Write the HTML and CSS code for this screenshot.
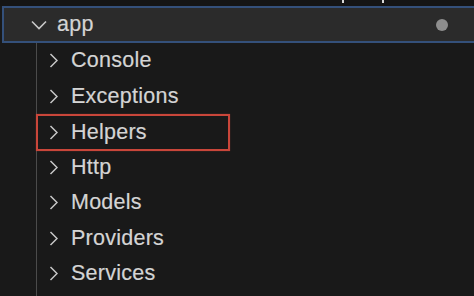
FILE: index.html
```html
<!DOCTYPE html>
<html>
<head>
<meta charset="utf-8">
<link rel="stylesheet" href="styles.css">
</head>
<body>
<div class="explorer">
  <div class="top-strip">
    <span class="frag frag-a"></span>
    <span class="frag frag-b"></span>
  </div>
  <div class="row folder-open">
    <svg class="chev-down" width="16" height="10" viewBox="0 0 16 10"><polyline points="1,1.5 8,8.5 15,1.5" fill="none" stroke="#c8c8c8" stroke-width="1.6"/></svg>
    <span class="label">app</span>
    <span class="dot"></span>
  </div>
  <div class="children">
    <div class="row child"><svg class="chev" width="9" height="15" viewBox="0 0 9 15"><polyline points="1.5,1 8,7.5 1.5,14" fill="none" stroke="#c8c8c8" stroke-width="1.5"/></svg><span class="label">Console</span></div>
    <div class="row child"><svg class="chev" width="9" height="15" viewBox="0 0 9 15"><polyline points="1.5,1 8,7.5 1.5,14" fill="none" stroke="#c8c8c8" stroke-width="1.5"/></svg><span class="label">Exceptions</span></div>
    <div class="row child highlight"><svg class="chev" width="9" height="15" viewBox="0 0 9 15"><polyline points="1.5,1 8,7.5 1.5,14" fill="none" stroke="#c8c8c8" stroke-width="1.5"/></svg><span class="label">Helpers</span></div>
    <div class="row child"><svg class="chev" width="9" height="15" viewBox="0 0 9 15"><polyline points="1.5,1 8,7.5 1.5,14" fill="none" stroke="#c8c8c8" stroke-width="1.5"/></svg><span class="label">Http</span></div>
    <div class="row child"><svg class="chev" width="9" height="15" viewBox="0 0 9 15"><polyline points="1.5,1 8,7.5 1.5,14" fill="none" stroke="#c8c8c8" stroke-width="1.5"/></svg><span class="label">Models</span></div>
    <div class="row child"><svg class="chev" width="9" height="15" viewBox="0 0 9 15"><polyline points="1.5,1 8,7.5 1.5,14" fill="none" stroke="#c8c8c8" stroke-width="1.5"/></svg><span class="label">Providers</span></div>
    <div class="row child"><svg class="chev" width="9" height="15" viewBox="0 0 9 15"><polyline points="1.5,1 8,7.5 1.5,14" fill="none" stroke="#c8c8c8" stroke-width="1.5"/></svg><span class="label">Services</span></div>
  </div>
</div>
</body>
</html>
```

FILE: styles.css
```css
html, body {
  margin: 0;
  padding: 0;
  background: #191919;
  width: 474px;
  height: 296px;
  overflow: hidden;
}

.explorer {
  font-family: "Liberation Sans", Arial, sans-serif;
  color: #d4d4d4;
  font-size: 21.5px;
  height: 296px;
  display: flex;
  flex-direction: column;
}

.top-strip {
  height: 6px;
  flex: none;
  display: flex;
  align-items: flex-start;
  background: #151515;
}

.frag {
  display: block;
  width: 2px;
  height: 3px;
  background: #d8d8d8;
}

.frag-a { margin-left: 342px; }
.frag-b { margin-left: 38px; }

.row {
  display: flex;
  align-items: center;
  box-sizing: border-box;
}

.folder-open {
  flex: none;
  height: 37px;
  margin-left: 2px;
  margin-right: -10px;
  border: 2px solid #34507a;
  background: #2b2b2b;
  padding-left: 27px;
}

.chev-down {
  flex: none;
  margin-right: 10px;
  margin-top: 1px;
}

.dot {
  margin-left: auto;
  margin-right: 34px;
  width: 12px;
  height: 12px;
  border-radius: 50%;
  background: #8e8e8e;
}

.children {
  flex: 1;
  min-height: 0;
  margin-left: 36px;
  border-left: 1px solid #4b4b4b;
}

.child {
  height: 35.5px;
  padding-left: 12px;
}

.chev {
  flex: none;
  margin-right: 13px;
}

.label {
  line-height: 1;
  letter-spacing: 0.25px;
  -webkit-text-stroke: 0.2px #d4d4d4;
}

.highlight {
  width: 194px;
  margin-left: -1px;
  padding-left: 13px;
  box-shadow: inset 0 0 0 2px #c9463a, 0 0 1px 0 rgba(201, 70, 58, 0.6);
  height: 37px;
  margin-bottom: -1.5px;
}
```
